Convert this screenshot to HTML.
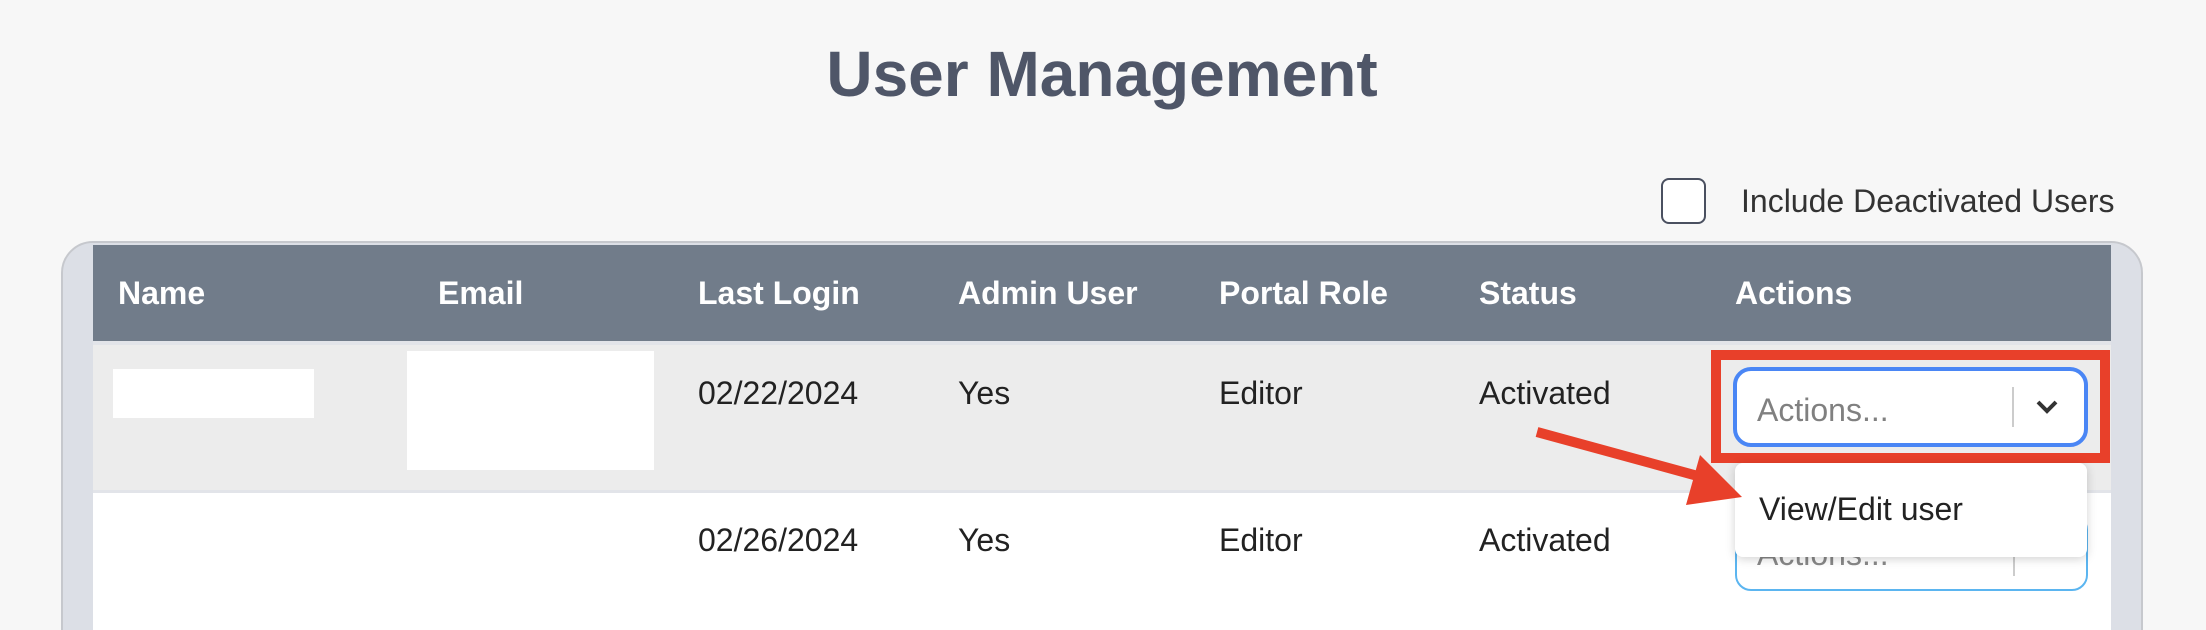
<!DOCTYPE html>
<html><head><meta charset="utf-8"><style>
*{margin:0;padding:0;box-sizing:border-box}
html,body{width:2206px;height:630px;overflow:hidden;background:#f7f7f7;font-family:"Liberation Sans",Arial,sans-serif}
#w{position:relative;width:2206px;height:630px;overflow:hidden}
.abs{position:absolute}
h1{position:absolute;left:0;width:2206px;top:38px;text-align:center;font-size:64px;font-weight:bold;color:#4f5668;line-height:72px}
.t{position:absolute;font-size:32px;line-height:36px;white-space:nowrap}
.h{color:#fff;font-weight:bold;top:275px}
.r1{color:#222;top:375px}
.r2{color:#222;top:522px}
</style></head><body><div id="w">
<h1 style="left:-1px">User Management</h1>
<div class="abs" style="left:1661px;top:178px;width:45px;height:46px;border:2px solid #4a5060;border-radius:8px;background:#fff"></div>
<div class="t" style="left:1741px;top:183px;color:#333">Include Deactivated Users</div>

<div class="abs" style="left:61px;top:241px;width:2082px;height:420px;background:#dcdfe6;border:2px solid #c6c8cd;border-radius:32px"></div>
<div class="abs" style="left:93px;top:245px;width:2018px;height:96px;background:#717c8a"></div>
<div class="abs" style="left:93px;top:341px;width:2018px;height:4px;background:#e2e4e9"></div>
<div class="abs" style="left:93px;top:345px;width:2018px;height:145px;background:#ececec"></div>
<div class="abs" style="left:93px;top:490px;width:2018px;height:3px;background:#e2e4e9"></div>
<div class="abs" style="left:93px;top:493px;width:2018px;height:140px;background:#fff"></div>

<div class="t h" style="left:118px">Name</div>
<div class="t h" style="left:438px">Email</div>
<div class="t h" style="left:698px">Last Login</div>
<div class="t h" style="left:958px">Admin User</div>
<div class="t h" style="left:1219px">Portal Role</div>
<div class="t h" style="left:1479px">Status</div>
<div class="t h" style="left:1735px">Actions</div>

<div class="abs" style="left:113px;top:369px;width:201px;height:49px;background:#fff"></div>
<div class="abs" style="left:407px;top:351px;width:247px;height:119px;background:#fff"></div>
<div class="t r1" style="left:698px">02/22/2024</div>
<div class="t r1" style="left:958px">Yes</div>
<div class="t r1" style="left:1219px">Editor</div>
<div class="t r1" style="left:1479px">Activated</div>
<div class="t r2" style="left:698px">02/26/2024</div>
<div class="t r2" style="left:958px">Yes</div>
<div class="t r2" style="left:1219px">Editor</div>
<div class="t r2" style="left:1479px">Activated</div>

<div class="abs" style="left:1735px;top:514px;width:353px;height:77px;border:2px solid #5bb5f0;border-radius:16px;background:#fff;overflow:hidden">
<div class="t" style="left:20px;top:20px;color:#888">Actions...</div>
<div class="abs" style="left:276px;top:20px;width:2px;height:40px;background:#ccc"></div>
</div>

<div class="abs" style="left:1711px;top:350px;width:399px;height:113px;border:10px solid #e8402a"></div>
<div class="abs" style="left:1733px;top:367px;width:355px;height:80px;border:4px solid #4a86f5;border-radius:18px;background:#fff">
<div class="t" style="left:20px;top:21px;color:#808080">Actions...</div>
<div class="abs" style="left:275px;top:16px;width:2px;height:40px;background:#ccc"></div>
<svg class="abs" style="left:298px;top:28px" width="24" height="16" viewBox="0 0 24 16"><path d="M3 3 L12 12 L21 3" fill="none" stroke="#333" stroke-width="4"/></svg>
</div>

<div class="abs" style="left:1735px;top:463px;width:352px;height:94px;background:#fff;border-radius:8px;box-shadow:0 2px 10px rgba(0,0,0,0.18)">
<div class="t" style="left:24px;top:28px;color:#222">View/Edit user</div>
</div>

<svg class="abs" style="left:0;top:0" width="2206" height="630">
<line x1="1537" y1="432" x2="1705" y2="478" stroke="#e8402a" stroke-width="10"/>
<polygon points="1700,455 1742,497 1686,505" fill="#e8402a"/>
</svg>
</div></body></html>
